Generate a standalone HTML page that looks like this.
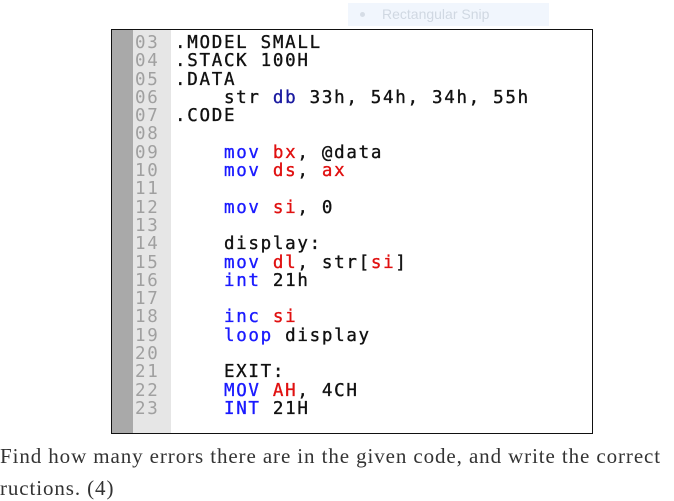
<!DOCTYPE html>
<html><head><style>
body{margin:0;width:674px;height:499px;background:#fff;position:relative;overflow:hidden}
.snip{position:absolute;left:348px;top:3px;width:201px;height:23px;background:#f1f6fd}
.snip span{position:absolute;left:34px;top:3px;font:14px "Liberation Sans",sans-serif;color:#d0d8e2}
.snip i{position:absolute;left:12px;top:9px;width:5px;height:5px;border-radius:50%;background:#d6dde6}
.box{position:absolute;left:111px;top:29px;width:480px;height:403px;border:1px solid #111;background:#fff}
.g1{position:absolute;left:0;top:0;width:21px;height:100%;background:#a9a9a9}
.g2{position:absolute;left:21px;top:0;width:38px;height:100%;background:#e6e6e6}
pre{margin:0;position:absolute;top:4px;font-family:"DejaVu Sans Mono","Liberation Mono",monospace;font-size:17.5px;line-height:18.3px;letter-spacing:1.7px;font-weight:normal}
.n{left:23px;color:#a0a0a0}
.c{left:63px;color:#111;-webkit-text-stroke:0.35px currentColor}
.b{color:#1a1aff}.r{color:#e01010}.d{color:#1a1aa0}
.t{position:absolute;left:0;font:21px "Liberation Serif",serif;letter-spacing:0.9px;color:#333;white-space:nowrap}
</style></head><body>
<div class="snip"><i></i><span>Rectangular Snip</span></div>
<div class="box"><div class="g1"></div><div class="g2"></div>
<pre class="n">03
04
05
06
07
08
09
10
11
12
13
14
15
16
17
18
19
20
21
22
23</pre>
<pre class="c">.MODEL SMALL
.STACK 100H
.DATA
    str <span class="d">db</span> 33h, 54h, 34h, 55h
.CODE

    <span class="b">mov</span> <span class="r">bx</span>, @data
    <span class="b">mov</span> <span class="r">ds</span>, <span class="r">ax</span>

    <span class="b">mov</span> <span class="r">si</span>, 0

    display:
    <span class="b">mov</span> <span class="r">dl</span>, str[<span class="r">si</span>]
    <span class="b">int</span> 21h

    <span class="b">inc</span> <span class="r">si</span>
    <span class="b">loop</span> display

    EXIT:
    <span class="b">MOV</span> <span class="r">AH</span>, 4CH
    <span class="b">INT</span> 21H</pre>
</div>
<div class="t" style="top:444px">Find how many errors there are in the given code, and write the correct</div>
<div class="t" style="top:476px">ructions. (4)</div>
</body></html>
